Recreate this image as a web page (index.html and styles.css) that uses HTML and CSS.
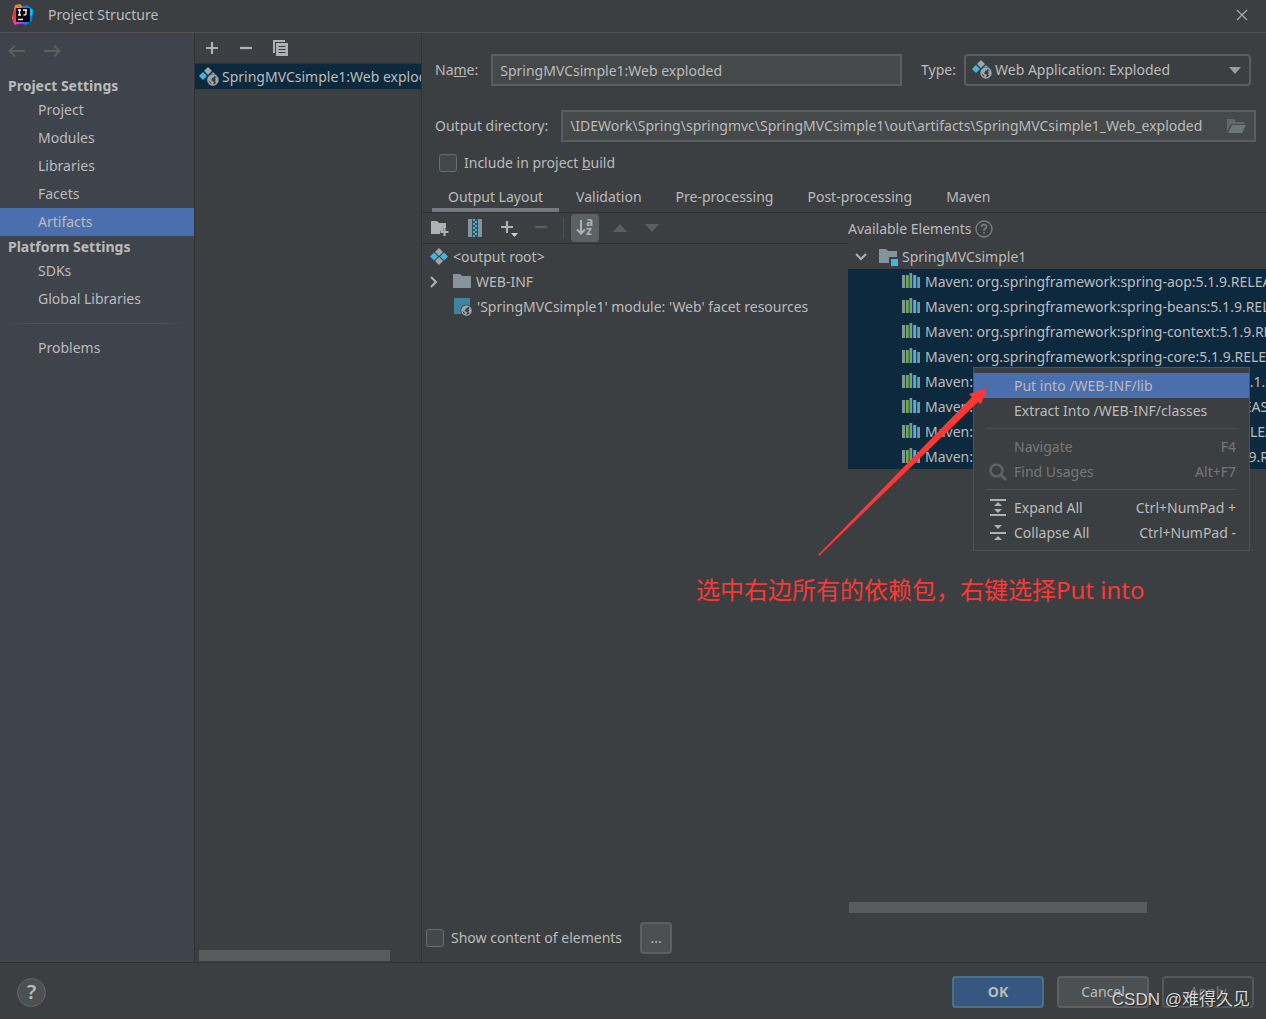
FILE: index.html
```html
<!DOCTYPE html>
<html lang="en">

<head>
    <meta charset="UTF-8">
    <meta name="viewport" content="width=device-width, initial-scale=1.0">
    <title>Project Structure</title>
    <link rel="stylesheet" href="styles.css">
</head>

<body>
    <!-- shared icons -->
    <svg class="defs" aria-hidden="true">
        <symbol id="globe" viewBox="0 0 12 12">
            <circle cx="6" cy="6" r="5" fill="#3c3f41" stroke="#9aa7b0" stroke-width="1.4"/>
            <path d="M1 4l3-3 4 0-1 2-2 1 0 1.500-1.500 0L5 7l2 1-1.500 3-1-.5L4 8.500 1 6zM9 3l2 2v3L9 9 8 7l1-1-1-1z" fill="#9aa7b0"/>
        </symbol>
        <symbol id="artifact-web" viewBox="0 0 20 20">
            <path d="M9 0l4 4-4 4-4-4z" fill="#9aa7b0"/>
            <path d="M4 5l4 4-4 4-4-4zM14 5l4 4H10z" fill="#40b6e0"/>
            <circle cx="13.500" cy="13" r="6" fill="#3c3f41"/>
            <use href="#globe" x="8" y="7" width="12" height="12"/>
        </symbol>
        <symbol id="library" viewBox="0 0 18 18">
            <path d="M0 2h3v13H0zM7.500 0h2.700v15H7.500zM15.200 4H18v11h-2.800z" fill="#87939a"/>
            <path d="M3.800 2h2.900v13H3.800z" fill="#62b543"/>
            <path d="M11.200 2h3v13h-3z" fill="#40b6e0"/>
        </symbol>
        <symbol id="folder" viewBox="0 0 18 16">
            <path d="M0 0h7l2 2h9v12H0z" fill="#87939a"/>
        </symbol>
    </svg>

    <div class="dialog">
        <header class="titlebar">
            <svg class="logo" width="22" height="22" viewBox="0 0 22 22">
                <path d="M3 1 8 0 11 3 5 19 2 20 0 14z" fill="#fc801d"/>
                <path d="M1 8 4 4 7 12 4 20 1 17z" fill="#fe2857"/>
                <path d="M10 2 15 1 21 6 20 17 14 21 8 19z" fill="#087cfa"/>
                <path d="M3 15 9 17 12 19 6 20 2 21z" fill="#d73cea"/>
                <path d="M17 3 21 6 20 12 17 11z" fill="#07c3f2"/>
                <path d="M4 4h14v14H4z" fill="#000"/>
                <path d="M6 6h3M7.500 6v5M6 11h3M11 6h4M14 6v4q0 1-2.500 1M6 15.500h5" fill="none" stroke="#fff" stroke-width="1.300"/>
            </svg>
            <h1>Project Structure</h1>
            <button class="close" aria-label="Close">
                <svg width="12" height="12" viewBox="0 0 12 12"><path d="M1 1l10 10M11 1 1 11" stroke="#a8abad" stroke-width="1.200"/></svg>
            </button>
        </header>

        <div class="content">
            <nav class="sidebar">
                <div class="history">
                    <button aria-label="Back"><svg width="18" height="14" viewBox="0 0 18 14"><path d="M17 7H2M7 1.500 1.500 7 7 12.500" fill="none" stroke="#5c5e60" stroke-width="2"/></svg></button>
                    <button aria-label="Forward"><svg width="18" height="14" viewBox="0 0 18 14"><path d="M1 7h15M11 1.500 16.500 7 11 12.500" fill="none" stroke="#5c5e60" stroke-width="2"/></svg></button>
                </div>
                <h2>Project Settings</h2>
                <a href="#project">Project</a>
                <a href="#modules">Modules</a>
                <a href="#libraries">Libraries</a>
                <a href="#facets">Facets</a>
                <a href="#artifacts" class="active">Artifacts</a>
                <h2>Platform Settings</h2>
                <a href="#sdks">SDKs</a>
                <a href="#global">Global Libraries</a>
                <hr>
                <a href="#problems">Problems</a>
            </nav>

            <section class="artifacts">
                <div class="list-toolbar">
                    <button aria-label="Add"><svg width="14" height="14" viewBox="0 0 14 14"><path d="M7 1v12M1 7h12" stroke="#afb1b3" stroke-width="2.200"/></svg></button>
                    <button aria-label="Remove"><svg width="14" height="14" viewBox="0 0 14 14"><path d="M1 7h12" stroke="#afb1b3" stroke-width="2.200"/></svg></button>
                    <button aria-label="Copy"><svg width="16" height="16" viewBox="0 0 16 16"><path d="M0 0h12v2H2v11H0z" fill="#afb1b3"/><path d="M3 3h12v13H3z" fill="#afb1b3"/><path d="M5.500 6.500h7M5.500 9.500h7M5.500 12.500h7" stroke="#3c3f41"/></svg></button>
                </div>
                <ul class="artifact-list">
                    <li class="selected"><svg width="20" height="20"><use href="#artifact-web"/></svg><span>SpringMVCsimple1:Web exploded</span></li>
                </ul>
                <div class="scroll-thumb"></div>
            </section>

            <main class="editor">
                <div class="field-row name-row">
                    <label for="name">Na<u>m</u>e:</label>
                    <input type="text" id="name" class="field" value="SpringMVCsimple1:Web exploded">
                    <label for="type">Type:</label>
                    <div class="select-box">
                        <svg width="20" height="20"><use href="#artifact-web"/></svg>
                        <select id="type">
                            <option>Web Application: Exploded</option>
                        </select>
                        <svg width="12" height="7" viewBox="0 0 12 7"><path d="M0 0h12L6 7z" fill="#9a9da0"/></svg>
                    </div>
                </div>
                <div class="field-row">
                    <label for="outputDir">Output directory:</label>
                    <div class="field path-box">
                        <input type="text" id="outputDir" value="\IDEWork\Spring\springmvc\SpringMVCsimple1\out\artifacts\SpringMVCsimple1_Web_exploded">
                        <button aria-label="Browse">
                            <svg width="20" height="14" viewBox="0 0 20 14"><path d="M0 0h7l2 3h8v2H4L0 12z" fill="#626a6d"/><path d="M5 6h14l-4 8H1z" fill="#6e7679"/></svg>
                        </button>
                    </div>
                </div>
                <div class="check-row">
                    <input type="checkbox" id="includeBuild">
                    <label for="includeBuild">Include in project <u>b</u>uild</label>
                </div>

                <div class="tabs" role="tablist">
                    <button role="tab" class="active" aria-selected="true">Output Layout</button>
                    <button role="tab">Validation</button>
                    <button role="tab">Pre-processing</button>
                    <button role="tab">Post-processing</button>
                    <button role="tab">Maven</button>
                </div>

                <div class="panes">
                    <section class="layout-pane">
                        <div class="layout-toolbar">
                            <button aria-label="Create directory"><svg width="20" height="18" viewBox="0 0 20 18"><path d="M1 2h6l2 2h7v5h-3v3h-3v3H1z" fill="#afb1b3"/><path d="M14.500 9v8M10.500 13h8" stroke="#afb1b3" stroke-width="2.200"/></svg></button>
                            <button aria-label="Create archive"><svg width="14" height="18" viewBox="0 0 14 18"><path d="M0 0h4v18H0zM10 0h4v18h-4z" fill="#87939a"/><path d="M4 0h6v18H4z" fill="#35505d"/><path d="M5 0h2v2H5zM7 2h2v2H7zM5 4h2v2H5zM7 6h2v2H7zM5 8h2v2H5zM7 10h2v2H7zM5 12h2v2H5zM7 14h2v2H7zM5 16h2v2H5z" fill="#40b6e0"/></svg></button>
                            <button aria-label="Add copy of"><svg width="18" height="18" viewBox="0 0 18 18"><path d="M7 2v12M1 8h12" stroke="#afb1b3" stroke-width="2.200"/><path d="M11 14h7l-3.500 4z" fill="#cfd1d3"/></svg></button>
                            <button aria-label="Remove element"><svg width="14" height="14" viewBox="0 0 14 14"><path d="M1 6h12" stroke="#5c5e60" stroke-width="2.200"/></svg></button>
                            <span class="divider"></span>
                            <button class="pressed" aria-label="Sort by name">
                                <svg width="18" height="18" viewBox="0 0 18 18">
                                    <path d="M5 1v13M1 10.500l4 4 4-4" fill="none" stroke="#afb1b3" stroke-width="2"/>
                                    <text x="10" y="7">a</text>
                                    <text x="10" y="16">z</text>
                                </svg>
                            </button>
                            <button aria-label="Move up"><svg width="14" height="8" viewBox="0 0 14 8"><path d="M0 8h14L7 0z" fill="#5c5e60"/></svg></button>
                            <button aria-label="Move down"><svg width="14" height="8" viewBox="0 0 14 8"><path d="M0 0h14L7 8z" fill="#5c5e60"/></svg></button>
                        </div>
                        <ul class="tree">
                            <li>
                                <svg width="18" height="18" viewBox="0 0 18 18"><path d="M9 0l4 4-4 4-4-4zM9 9l4 4-4 4-4-4z" fill="#9aa7b0"/><path d="M4 4.500l4 4-4 4-4-4zM14 4.500l4 4-4 4-4-4z" fill="#40b6e0"/></svg>
                                <span>&lt;output root&gt;</span>
                            </li>
                            <li>
                                <svg class="chevron" width="8" height="12" viewBox="0 0 8 12"><path d="M1 1l5 5-5 5" fill="none" stroke="#afb1b3" stroke-width="2"/></svg>
                                <svg width="18" height="16"><use href="#folder"/></svg>
                                <span>WEB-INF</span>
                            </li>
                            <li class="leaf">
                                <svg width="18" height="18" viewBox="0 0 18 18"><path d="M0 0h16v16H0z" fill="#3e86a0"/><circle cx="12.500" cy="12.500" r="6" fill="#3c3f41"/><use href="#globe" x="7" y="7" width="11" height="11"/></svg>
                                <span>'SpringMVCsimple1' module: 'Web' facet resources</span>
                            </li>
                        </ul>
                    </section>

                    <section class="available-pane">
                        <h3>Available Elements
                            <svg width="18" height="18" viewBox="0 0 18 18"><circle cx="9" cy="9" r="8" fill="none" stroke="#7f8283" stroke-width="1.300"/><path d="M6.500 7q0-2.500 2.500-2.500T11.500 7Q11.500 8 9 9.500V11M9 12v1.600" fill="none" stroke="#7f8283" stroke-width="1.500"/></svg>
                        </h3>
                        <div class="module">
                            <svg width="12" height="8" viewBox="0 0 12 8"><path d="M1 1l5 5 5-5" fill="none" stroke="#afb1b3" stroke-width="2"/></svg>
                            <svg width="20" height="18" viewBox="0 0 20 18"><path d="M0 1h7l2 2h9v6h-8v6H0z" fill="#87939a"/><path d="M12 11h7v7h-7z" fill="#40b6e0"/></svg>
                            <span>SpringMVCsimple1</span>
                        </div>
                        <ul class="elements">
                            <li><svg width="18" height="18"><use href="#library"/></svg>Maven: org.springframework:spring-aop:5.1.9.RELEASE</li>
                            <li><svg width="18" height="18"><use href="#library"/></svg>Maven: org.springframework:spring-beans:5.1.9.RELEASE</li>
                            <li><svg width="18" height="18"><use href="#library"/></svg>Maven: org.springframework:spring-context:5.1.9.RELEASE</li>
                            <li><svg width="18" height="18"><use href="#library"/></svg>Maven: org.springframework:spring-core:5.1.9.RELEASE</li>
                            <li><svg width="18" height="18"><use href="#library"/></svg>Maven: org.springframework:spring-expression:5.1.9.RELEASE</li>
                            <li><svg width="18" height="18"><use href="#library"/></svg>Maven: org.springframework:spring-jcl:5.1.9.RELEASE</li>
                            <li><svg width="18" height="18"><use href="#library"/></svg>Maven: org.springframework:spring-web:5.1.9.RELEASE</li>
                            <li><svg width="18" height="18"><use href="#library"/></svg>Maven: org.springframework:spring-webmvc:5.1.9.RELEASE</li>
                        </ul>
                        <div class="scroll-thumb"></div>
                    </section>
                </div>

                <div class="options">
                    <input type="checkbox" id="showContent">
                    <label for="showContent">Show content of elements</label>
                    <button class="btn more">...</button>
                </div>
            </main>
        </div>

        <footer class="footer">
            <button class="help" aria-label="Help">?</button>
            <button class="btn primary">OK</button>
            <button class="btn">Cancel</button>
            <button class="btn" disabled>Apply</button>
        </footer>

        <div class="context-menu" role="menu">
            <button role="menuitem" class="active"><span>Put into /WEB-INF/lib</span></button>
            <button role="menuitem"><span>Extract Into /WEB-INF/classes</span></button>
            <hr>
            <button role="menuitem" disabled><span>Navigate</span><kbd>F4</kbd></button>
            <button role="menuitem" disabled>
                <svg width="18" height="18" viewBox="0 0 18 18"><circle cx="7.500" cy="7.500" r="6" fill="none" stroke="#5f6163" stroke-width="2.500"/><path d="M12 12l5 5" stroke="#5f6163" stroke-width="3"/></svg>
                <span>Find Usages</span><kbd>Alt+F7</kbd>
            </button>
            <hr>
            <button role="menuitem">
                <svg width="18" height="18" viewBox="0 0 18 18"><path d="M1 0h16v2H1zM1 15h16v2H1zM9 3l4 4H5zM9 14l4-4H5z" fill="#afb1b3"/></svg>
                <span>Expand All</span><kbd>Ctrl+NumPad +</kbd>
            </button>
            <button role="menuitem">
                <svg width="18" height="18" viewBox="0 0 18 18"><path d="M5 1h8L9 5zM1 8h16v2H1zM9 12l4 4H5z" fill="#afb1b3"/></svg>
                <span>Collapse All</span><kbd>Ctrl+NumPad -</kbd>
            </button>
        </div>

        <svg class="arrow" width="170" height="168" viewBox="0 0 170 168"><path d="M169 0 163 16 160 14 1 168 0 167 154 9 151 6z" fill="#fc3735"/></svg>
        <p class="note" lang="zh-CN">选中右边所有的依赖包，右键选择Put into</p>
        <p class="watermark" lang="zh-CN">CSDN @难得久见</p>
    </div>
</body>

</html>
```
FILE: styles.css
```css
* {
    box-sizing: border-box;
}

body {
    margin: 0;
    background-color: #3c3f41;
    color: #bbbbbb;
    font-family: 'Noto Sans', 'Noto Sans CJK SC', sans-serif;
    font-size: 14px;
    line-height: 20px;
}

button,
input,
select {
    font: inherit;
    color: inherit;
    margin: 0;
}

button {
    display: flex;
    align-items: center;
    justify-content: center;
    padding: 0;
    border: none;
    background: none;
}

h1,
h2,
h3,
p,
ul {
    margin: 0;
    padding: 0;
    font-size: 14px;
    font-weight: 400;
    list-style: none;
}

svg {
    flex: none;
}

.defs {
    position: absolute;
    width: 0;
    height: 0;
}

.dialog {
    position: relative;
    display: flex;
    flex-direction: column;
    height: 100vh;
    overflow: hidden;
    white-space: nowrap;
}

/* title bar */
.titlebar {
    display: flex;
    align-items: center;
    height: 33px;
    padding: 0 18px 2px 12px;
    border-bottom: 1px solid #515151;
}

.titlebar h1 {
    margin-left: 14px;
}

.close {
    margin-left: auto;
}

.content {
    flex: 1;
    display: flex;
    min-height: 0;
}

/* left navigation */
.sidebar {
    flex: none;
    width: 195px;
    background-color: #3f434c;
    border-right: 1px solid #323232;
}

.history {
    display: flex;
    gap: 17px;
    height: 42px;
    padding: 0 8px 6px;
}

.sidebar h2 {
    padding-left: 8px;
    font-weight: 700;
    line-height: 21px;
}

.sidebar a {
    display: block;
    padding-left: 38px;
    line-height: 28px;
    color: inherit;
    text-decoration: none;
}

.sidebar a.active {
    background-color: #4b6eaf;
}

.sidebar hr {
    height: 1px;
    margin: 10px 8px;
    border: none;
    background: linear-gradient(to right, transparent, #515457 15%, #515457 85%, transparent);
}

/* artifact list */
.artifacts {
    flex: none;
    display: flex;
    flex-direction: column;
    width: 227px;
    border-right: 1px solid #323232;
}

.list-toolbar {
    display: flex;
    align-items: center;
    gap: 20px;
    height: 31px;
    padding: 0 10px;
    border-bottom: 1px solid #323232;
}

.artifact-list {
    flex: 1;
    overflow: hidden;
}

.artifact-list li {
    display: flex;
    align-items: center;
    gap: 3px;
    height: 25px;
    padding-left: 4px;
}

.artifact-list .selected {
    background-color: #0d293e;
}

.scroll-thumb {
    height: 11px;
    background-color: #595b5d;
}

.artifacts .scroll-thumb {
    margin: 0 31px 1px 4px;
}

/* artifact editor */
.editor {
    flex: 1;
    display: flex;
    flex-direction: column;
    min-width: 0;
    padding-top: 21px;
}

.field-row {
    display: flex;
    align-items: center;
    gap: 13px;
    margin-bottom: 24px;
    padding: 0 10px 0 13px;
}

.name-row {
    padding-right: 15px;
}

.name-row .field {
    flex: 1;
    margin-right: 6px;
}

.field {
    min-width: 0;
    height: 32px;
    padding: 0 7px;
    background-color: #45494a;
    border: 2px solid #5b5e60;
}

.select-box {
    display: flex;
    align-items: center;
    width: 287px;
    height: 32px;
    margin-left: -5px;
    padding: 0 8px 0 6px;
    border: 2px solid #5b5e60;
    border-radius: 4px;
}

.select-box select {
    flex: 1;
    padding: 0 3px;
    border: none;
    background: none;
    appearance: none;
}

.path-box {
    flex: 1;
    display: flex;
    gap: 8px;
}

.path-box input {
    flex: 1;
    min-width: 0;
    padding: 0;
    border: none;
    background: none;
}

.check-row,
.options {
    display: flex;
    align-items: center;
}

.check-row {
    gap: 7px;
    height: 20px;
    margin: -13px 0 9px;
    padding-left: 17px;
}

input[type="checkbox"] {
    width: 18px;
    height: 18px;
    appearance: none;
    background-color: #43494a;
    border: 1px solid #6b6b6b;
    border-radius: 3px;
}

.tabs {
    display: flex;
    height: 31px;
    padding-left: 10px;
    border-bottom: 1px solid #323232;
}

.tabs button {
    height: 30px;
    padding: 4px 17px 0;
    border-bottom: 4px solid transparent;
}

.tabs .active {
    padding: 4px 16px 0;
    border-color: #747a80;
}

.panes {
    flex: 1;
    display: flex;
    min-height: 0;
}

.layout-pane {
    flex: none;
    width: 426px;
}

.layout-toolbar {
    display: flex;
    align-items: center;
    gap: 18px;
    height: 31px;
    padding-left: 8px;
    border-bottom: 1px solid #323232;
}

.layout-toolbar button:nth-of-type(4) {
    margin-left: -2px;
}

.divider {
    width: 1px;
    height: 22px;
    margin: 0 -11px 0 -3px;
    background-color: #515151;
}

.pressed {
    width: 28px;
    height: 28px;
    margin-right: -4px;
    border-radius: 4px;
    background-color: #5c6164;
}

.pressed text {
    fill: #afb1b3;
    font-size: 12px;
    font-weight: 700;
}

.tree li {
    display: flex;
    align-items: center;
    gap: 5px;
    height: 25px;
    padding-left: 8px;
}

.tree .chevron {
    margin-right: 10px;
}

.tree .leaf {
    padding-left: 32px;
}

.available-pane {
    flex: 1;
    display: flex;
    flex-direction: column;
    min-width: 0;
}

.available-pane h3 {
    display: flex;
    align-items: center;
    gap: 4px;
    height: 31px;
}

.module {
    display: flex;
    align-items: center;
    gap: 3px;
    height: 25px;
    padding-left: 7px;
}

.module svg:first-child {
    margin-right: 9px;
}

.elements {
    flex: 1;
    overflow: hidden;
}

.elements li {
    display: flex;
    align-items: center;
    gap: 5px;
    height: 25px;
    padding-left: 54px;
    background-color: #0d293e;
}

.available-pane .scroll-thumb {
    width: 298px;
    margin-left: 1px;
}

.options {
    height: 49px;
    gap: 7px;
    padding-left: 4px;
}

.btn {
    width: 92px;
    height: 32px;
    border: 2px solid #5e6060;
    border-radius: 4px;
    background-color: #4c5052;
}

.btn:disabled {
    background-color: transparent;
    border-color: #55585a;
    color: #777777;
}

.btn.primary {
    background-color: #365880;
    border-color: #4c708c;
    font-weight: 700;
}

.btn.more {
    width: 32px;
    margin-left: 11px;
}

/* bottom bar */
.footer {
    display: flex;
    align-items: center;
    gap: 13px;
    height: 57px;
    padding: 2px 12px 0 17px;
    border-top: 1px solid #323232;
}

.help {
    width: 29px;
    height: 29px;
    margin-right: auto;
    border: 1px solid #646668;
    border-radius: 50%;
    background-color: #4c5052;
    font-size: 20px;
    font-weight: 600;
}

/* popup menu */
.context-menu {
    position: absolute;
    top: 367px;
    right: 16px;
    width: 277px;
    padding: 5px 0;
    background-color: #3c3f41;
    border: 1px solid #515151;
}

.context-menu button {
    display: grid;
    grid-template-columns: 18px 1fr auto;
    gap: 7px;
    width: 100%;
    height: 25px;
    padding: 0 13px 0 15px;
    text-align: left;
}

.context-menu span {
    grid-column: 2;
}

.context-menu kbd {
    font: inherit;
}

.context-menu .active {
    background-color: #4b6eaf;
}

.context-menu button:disabled {
    color: #777777;
}

.context-menu hr {
    height: 1px;
    margin: 5px 13px;
    border: none;
    background-color: #515151;
}

/* notes drawn over the dialog */
.arrow {
    position: absolute;
    top: 388px;
    left: 818px;
}

.note {
    position: absolute;
    top: 574px;
    left: 696px;
    color: #fc3735;
    font-size: 24px;
    line-height: 32px;
}

.watermark {
    position: absolute;
    right: 16px;
    bottom: 7px;
    color: #d4d5d6;
    font-family: 'Liberation Sans', 'Noto Sans CJK SC', sans-serif;
    font-size: 17px;
    line-height: 24px;
    text-shadow: 1px 1px 1px #222222;
}
```
